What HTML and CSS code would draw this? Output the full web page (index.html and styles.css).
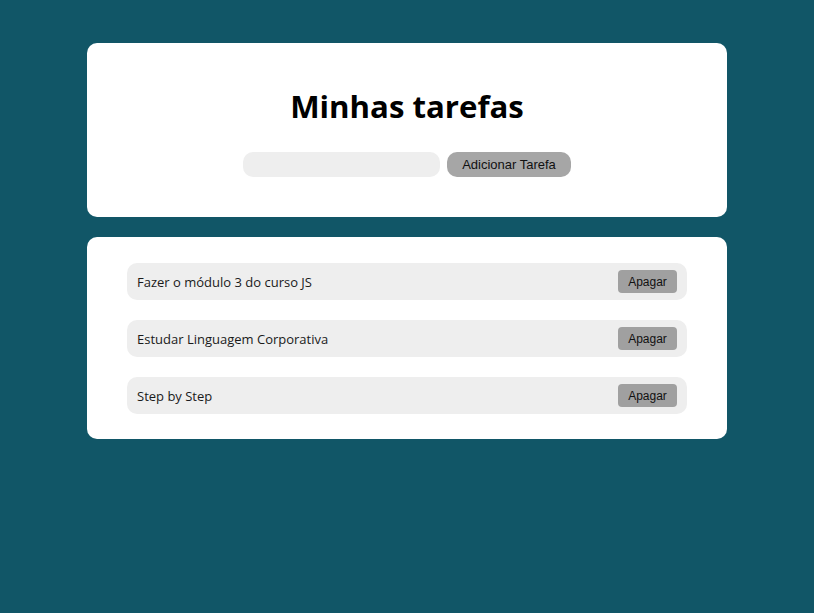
FILE: index.html
```html
<!DOCTYPE html>
<html lang="pt">
<head>
<meta charset="utf-8">
<title>Minhas tarefas</title>
<link rel="stylesheet" href="styles.css">
</head>
<body>
<main class="app">
  <section class="card header">
    <h1 class="title">Minhas tarefas</h1>
    <form class="add-form">
      <input class="task-input" type="text">
      <button class="add-btn" type="button">Adicionar Tarefa</button>
    </form>
  </section>
  <section class="card list">
    <div class="task"><span class="task-text">Fazer o módulo 3 do curso JS</span><button class="del-btn" type="button">Apagar</button></div>
    <div class="task"><span class="task-text">Estudar Linguagem Corporativa</span><button class="del-btn" type="button">Apagar</button></div>
    <div class="task"><span class="task-text">Step by Step</span><button class="del-btn" type="button">Apagar</button></div>
  </section>
</main>
</body>
</html>
```
FILE: styles.css
```css
html, body {
  margin: 0;
  padding: 0;
}
body {
  background: #115667;
  font-family: "Open Sans", sans-serif;
  min-height: 613px;
}
.app {
  width: 640px;
  margin: 0 auto;
  padding-top: 43px;
  display: flex;
  flex-direction: column;
  gap: 20px;
}
.card {
  background: #fff;
  border-radius: 10px;
}
.header {
  height: 174px;
  box-sizing: border-box;
  padding-top: 41px;
  display: flex;
  flex-direction: column;
  align-items: center;
}
.title {
  margin: 0;
  font-size: 31.2px;
  font-weight: 700;
  color: #000;
  line-height: 44px;
}
.add-form {
  margin-top: 24px;
  display: flex;
  gap: 7px;
}
.task-input {
  width: 197px;
  height: 25px;
  box-sizing: border-box;
  border: none;
  border-radius: 10px;
  background: #eeeeee;
  outline: none;
  padding: 0 10px;
}
.add-btn {
  width: 124px;
  height: 25px;
  border: none;
  border-radius: 10px;
  background: #a6a6a6;
  font-family: "Liberation Sans", Arial, sans-serif;
  font-size: 13px;
  color: #111;
  padding: 0;
}
.list {
  padding: 26px 40px 25px;
  display: flex;
  flex-direction: column;
  gap: 20px;
}
.task {
  height: 37px;
  box-sizing: border-box;
  background: #eeeeee;
  border-radius: 10px;
  padding: 0 10px;
  display: flex;
  align-items: center;
  justify-content: space-between;
}
.task-text {
  font-size: 13px;
  color: #1a1a1a;
}
.del-btn {
  width: 59px;
  height: 23px;
  border: none;
  border-radius: 4px;
  background: #a0a0a0;
  font-family: "Liberation Sans", Arial, sans-serif;
  font-size: 12px;
  color: #111;
  padding: 0;
}
```
